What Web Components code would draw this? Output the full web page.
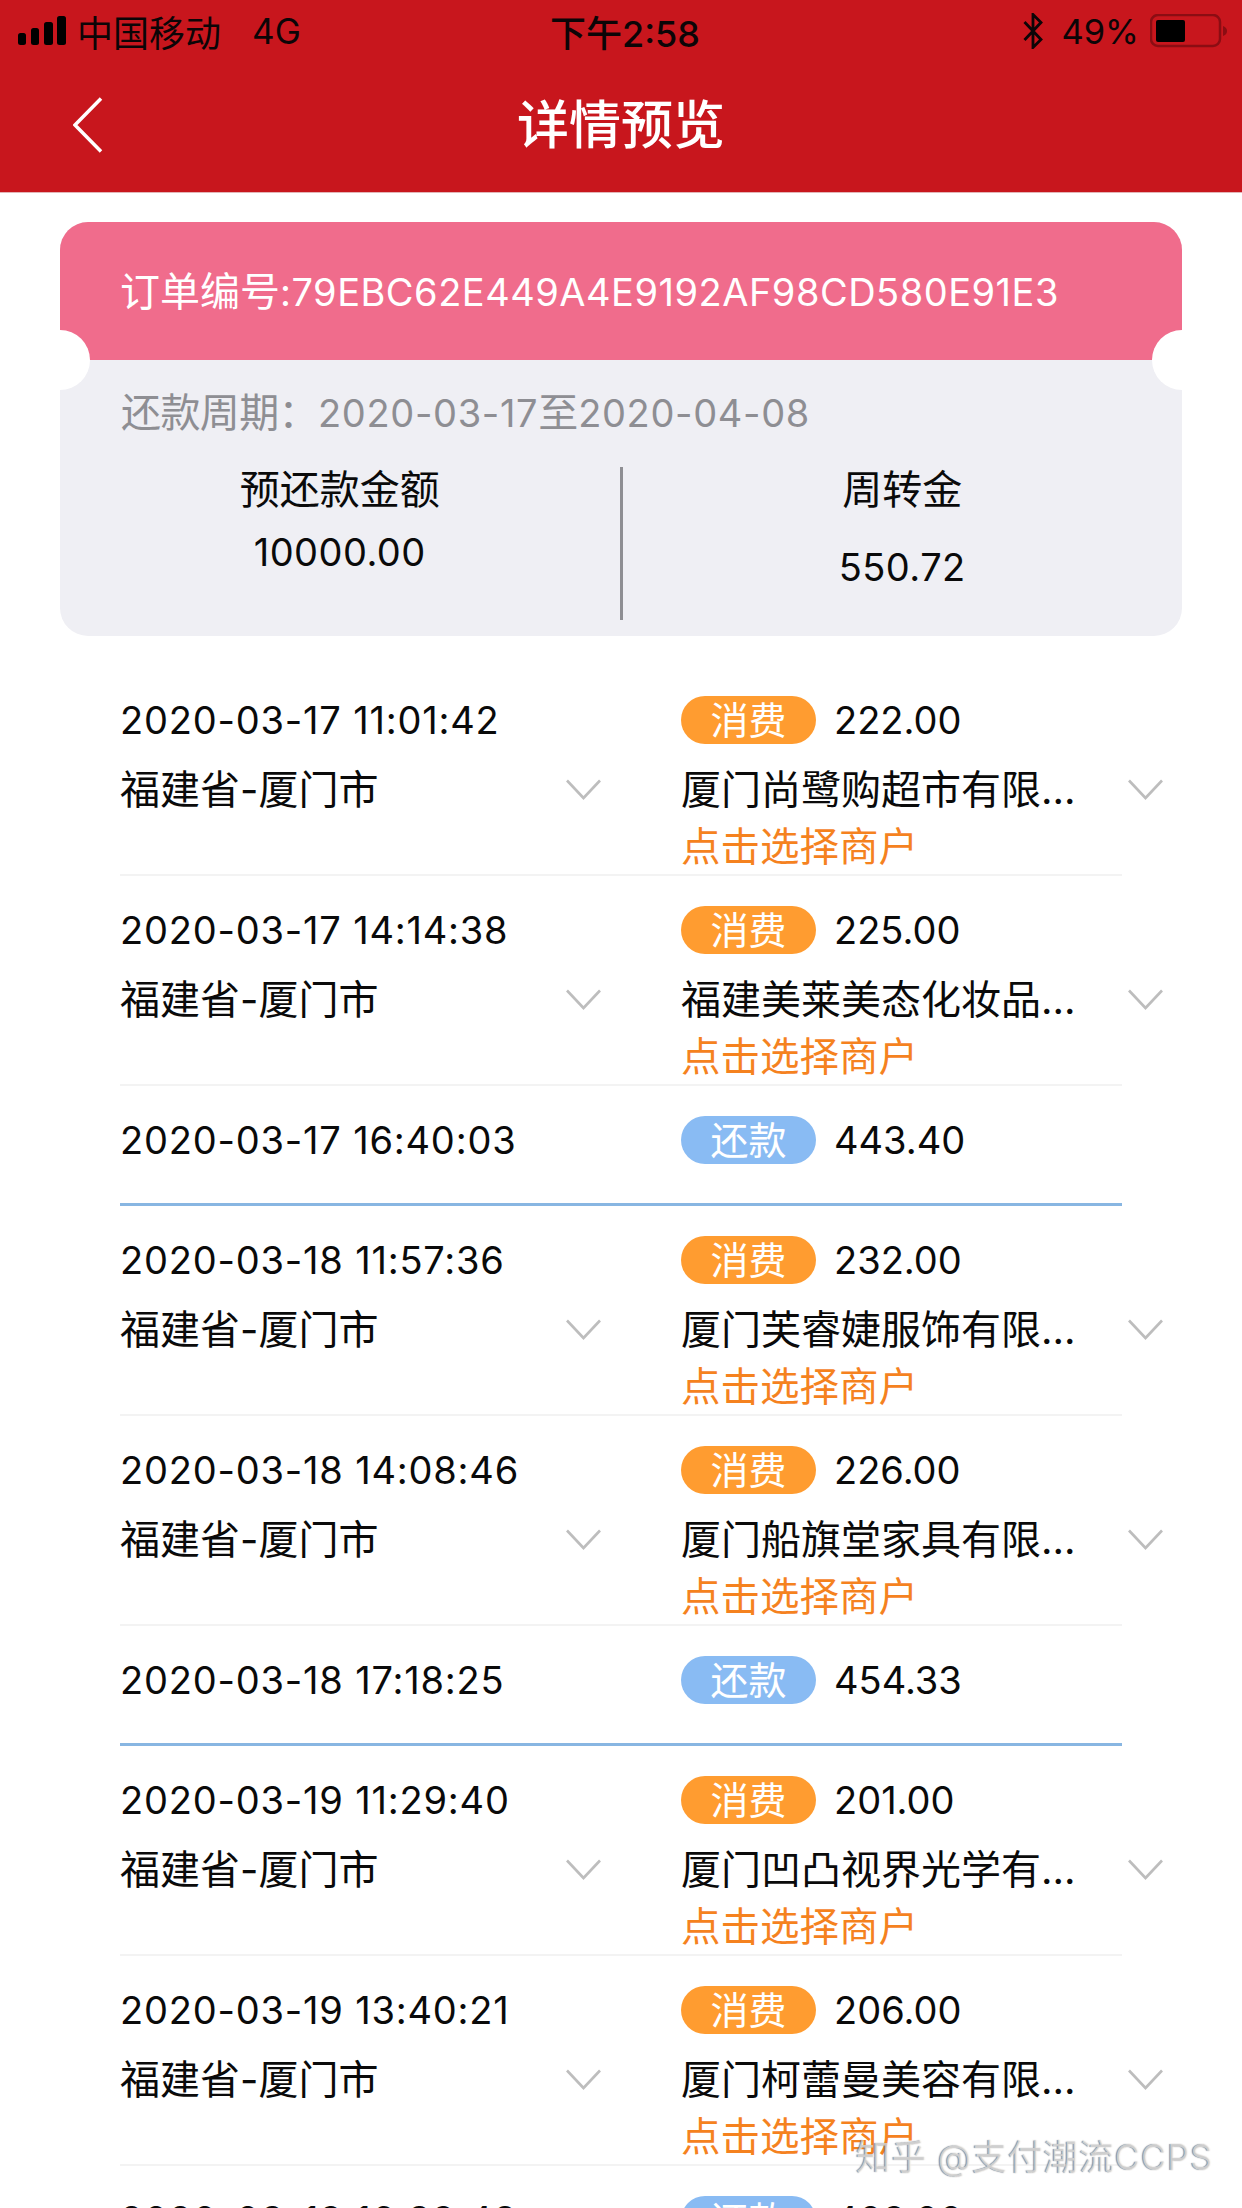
<!DOCTYPE html>
<html lang="zh-CN">
<head>
<meta charset="utf-8">
<title>详情预览</title>
<style>
html,body{margin:0;padding:0;background:#fff}
body{width:1242px;height:2208px;overflow:hidden;position:relative;font-family:Inter,"Noto Sans CJK SC",sans-serif;color:#0a0a0a}
</style>
</head>
<body>
<app-header title="详情预览"></app-header>
<order-card order="79EBC62E449A4E9192AF98CD580E91E3" start="2020-03-17" end="2020-04-08" amount="10000.00" fee="550.72"></order-card>
<tx-list>
  <tx-row time="2020-03-17 11:01:42" amount="222.00" merchant="厦门尚鹭购超市有限..."></tx-row>
  <tx-row time="2020-03-17 14:14:38" amount="225.00" merchant="福建美莱美态化妆品..."></tx-row>
  <tx-row time="2020-03-17 16:40:03" amount="443.40" repay></tx-row>
  <tx-row time="2020-03-18 11:57:36" amount="232.00" merchant="厦门芙睿婕服饰有限..."></tx-row>
  <tx-row time="2020-03-18 14:08:46" amount="226.00" merchant="厦门船旗堂家具有限..."></tx-row>
  <tx-row time="2020-03-18 17:18:25" amount="454.33" repay></tx-row>
  <tx-row time="2020-03-19 11:29:40" amount="201.00" merchant="厦门凹凸视界光学有..."></tx-row>
  <tx-row time="2020-03-19 13:40:21" amount="206.00" merchant="厦门柯蕾曼美容有限..."></tx-row>
  <tx-row time="2020-03-19 16:39:48" amount="409.00" repay></tx-row>
</tx-list>
<water-mark>知乎 @支付潮流CCPS</water-mark>
<script>
const FONT='Inter,"Noto Sans CJK SC",sans-serif';
class Base extends HTMLElement{
  mount(html){this.attachShadow({mode:'open'}).innerHTML=html;}
}
const chevron=`<svg class="chev" width="35" height="21" viewBox="0 0 35 21" aria-hidden="true"><path d="M1 1.5 17.5 19 34 1.5" fill="none" stroke="#bdbdbd" stroke-width="2.6"/></svg>`;
customElements.define('app-header',class extends Base{
  connectedCallback(){
    this.mount(`<style>
      :host{display:block;background:#c8161d;height:192px;border-bottom:1px solid #e2b5b7;font-family:${FONT}}
      .status{display:grid;grid-template-columns:550px auto 1fr;height:62px;align-items:center;color:#0c0507;font-size:36px}
      .l{display:flex;align-items:center;padding-left:18px}
      .sig{margin-right:11px}
      .net{margin-left:31px;font-size:35px}
      .c{font-weight:500;font-size:36px}
      .c b{font-weight:500;font-size:36px}
      .r{display:flex;align-items:center;justify-content:flex-end;padding-right:15px}
      .bt{margin-right:18px}
      .pct{margin-right:11px;font-size:34.500px}
      .nav{display:grid;grid-template-columns:1fr auto 1fr;align-items:center;height:126px}
      .back{padding-left:73px;display:flex}
      h1{margin:0;font-size:52px;font-weight:500;color:#fff;line-height:60px;padding-top:2px}
    </style>
    <div class="status">
      <div class="l">
        <svg class="sig" width="48" height="30" viewBox="0 0 48 30" aria-hidden="true"><rect x="0" y="17" width="8" height="12" rx="2.5"/><rect x="13" y="12" width="8" height="17" rx="2.5"/><rect x="26" y="6" width="9" height="23" rx="2.5"/><rect x="39" y="0" width="9" height="29" rx="2.5"/></svg>
        <span>中国移动</span><span class="net">4G</span>
      </div>
      <div class="c">下午<b>2:58</b></div>
      <div class="r">
        <svg class="bt" width="20" height="36" viewBox="0 0 20 36" aria-hidden="true"><path d="M1.5 9 18 26.5 10 34.5V1.500L18 9.500 1.500 27" fill="none" stroke="#0c0507" stroke-width="2.800"/></svg>
        <span class="pct">49%</span>
        <svg width="77" height="34" viewBox="0 0 77 34" aria-hidden="true"><rect x="1" y="1" width="69" height="31" rx="7" fill="none" stroke="#8b0d13" stroke-width="2.500"/><rect x="6" y="6" width="29" height="22" rx="2" fill="#000"/><path d="M73 12c3 1 4 3 4 5s-1 4-4 5z" fill="#8b0d13"/></svg>
      </div>
    </div>
    <div class="nav">
      <div class="back"><svg width="30" height="56" viewBox="0 0 30 56" aria-hidden="true"><path d="M28 1.500 2 28 28 54.500" fill="none" stroke="#fff" stroke-width="3.500"/></svg></div>
      <h1>${this.getAttribute('title')}</h1>
      <div></div>
    </div>`);
  }
});
customElements.define('order-card',class extends Base{
  connectedCallback(){
    const a=n=>this.getAttribute(n);
    this.mount(`<style>
      :host{display:block;position:relative;margin:29px 60px 0;height:414px;border-radius:28px;overflow:hidden;background:#efeff4;font-family:${FONT};font-size:40px}
      :host::before,:host::after{content:"";position:absolute;top:108px;width:60px;height:60px;border-radius:50%;background:#fff}
      :host::before{left:-30px}
      :host::after{right:-30px}
      .top{height:134px;padding:0 0 4px 60px;background:#f06c8c;color:#fff;display:flex;align-items:center}
      .top .n{font-size:38px;letter-spacing:.5px}
      .cycle{padding:29px 0 0 61px;line-height:48px;color:#8e8e93}
      .cycle .p{letter-spacing:-.6px}
      .cycle .n{font-size:38px;letter-spacing:.65px}
      .sum{display:grid;grid-template-columns:1fr 3px 1fr;margin-top:30px;height:153px;text-align:center}
      .rule{background:#8e8e93}
      .t{line-height:46px}
      .v{line-height:44px;font-size:38px;letter-spacing:.45px}
      .v.a{margin-top:17px}
      .v.b{margin-top:32px}
    </style>
    <div class="top"><span>订单编号<span class="n">:${a('order')}</span></span></div>
    <div class="cycle"><span class="p">还款周期：</span><span class="n">${a('start')}</span>至<span class="n">${a('end')}</span></div>
    <div class="sum">
      <div><div class="t">预还款金额</div><div class="v a">${a('amount')}</div></div>
      <div class="rule"></div>
      <div><div class="t">周转金</div><div class="v b">${a('fee')}</div></div>
    </div>`);
  }
});
customElements.define('tx-list',class extends Base{
  connectedCallback(){
    this.mount(`<style>:host{display:block;margin-top:30px}</style><slot></slot>`);
  }
});
customElements.define('tx-row',class extends Base{
  connectedCallback(){
    const a=n=>this.getAttribute(n), repay=this.hasAttribute('repay');
    const more=repay?'':`
      <div class="cell"><div class="line pick"><span>福建省-厦门市</span>${chevron}</div></div>
      <div class="cell"><div class="line pick right"><span>${a('merchant')}</span>${chevron}</div><div class="link">点击选择商户</div></div>`;
    this.mount(`<style>
      :host{display:block;margin-left:120px;width:1002px;padding:30px 0 ${repay?39:5}px;border-bottom:${repay?'3px solid #88b6e2':'2px solid #f3f3f3'};font-family:${FONT};font-size:40px;color:#0a0a0a}
      .grid{display:grid;grid-template-columns:561px 482px;width:1043px}
      .head{height:48px;line-height:48px;display:flex;align-items:center;font-size:38px}
      .time{letter-spacing:.8px}
      .badge{width:135px;height:48px;border-radius:24px;background:${repay?'#89bbf3':'#ff9c30'};color:#fff;font-size:38px;display:flex;align-items:center;justify-content:center;margin-right:18px;line-height:48px}
      .cell{margin-top:22px}
      .line{height:48px;line-height:48px;display:flex;align-items:center;justify-content:space-between;padding-right:80px}
      .line.right{padding-right:0}
      .chev{flex:none;margin:-2px 0 0 14px}
      .link{margin-top:11px;line-height:44px;color:#f5821f;font-size:39.500px}
    </style>
    <div class="grid">
      <div class="head time">${a('time')}</div>
      <div class="head"><span class="badge">${repay?'还款':'消费'}</span>${a('amount')}</div>
      ${more}
    </div>`);
  }
});
customElements.define('water-mark',class extends Base{
  connectedCallback(){
    this.mount(`<style>
      :host{position:absolute;left:856px;top:2134px;font-family:${FONT};font-size:35px;line-height:46px;letter-spacing:.65px;white-space:nowrap;color:rgba(255,255,255,.6);text-shadow:-1px 0 1px rgba(100,100,100,.8)}
    </style><slot></slot>`);
  }
});
</script>
</body>
</html>
